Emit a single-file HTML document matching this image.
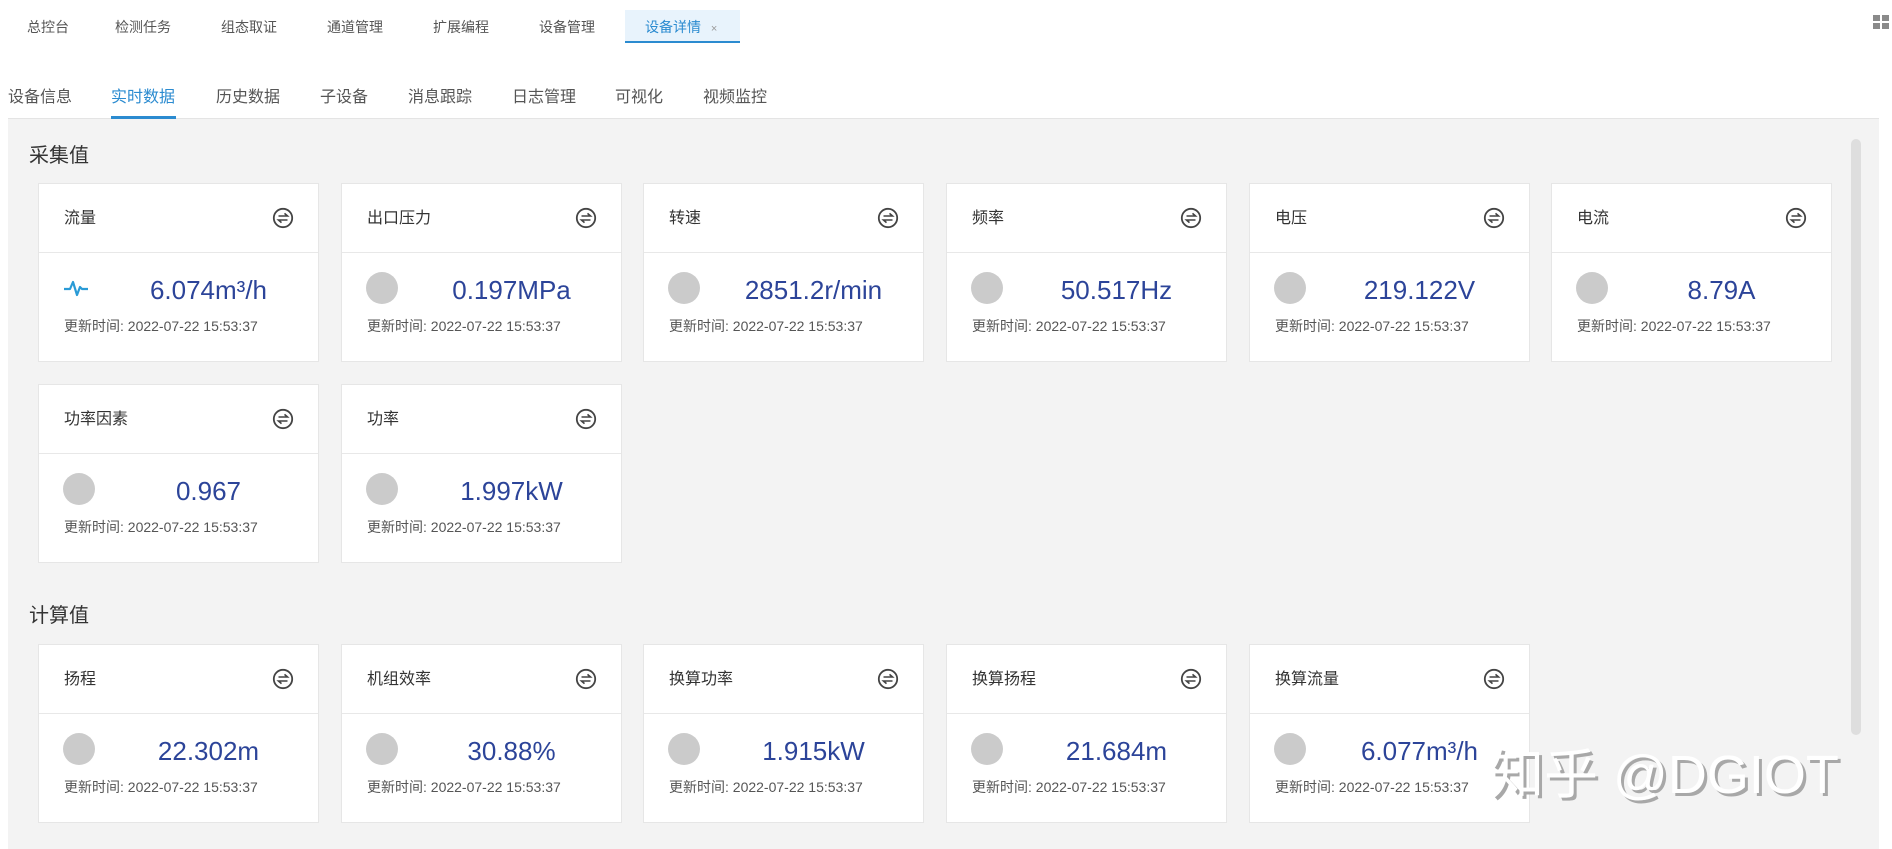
<!DOCTYPE html>
<html><head><meta charset="utf-8">
<style>
*{margin:0;padding:0;box-sizing:border-box}
body{width:1892px;height:849px;overflow:hidden;background:#fff;font-family:"Liberation Sans","Noto Sans CJK SC",sans-serif;position:relative;color:#333}
.a{position:absolute;white-space:nowrap}
.t1{top:17px;font-size:14px;color:#555}
.t2{top:83px;font-size:16px;color:#555}
.content{position:absolute;left:8px;top:119px;width:1871px;height:730px;background:#f3f3f3}
.sec{position:absolute;font-size:20px;color:#333}
.card{position:absolute;width:281px;height:179px;background:#fff;border:1px solid #e6e6e6}
.card .hd{height:69px;border-bottom:1px solid #e8e8e8;position:relative}
.card .ti{position:absolute;left:25px;top:20px;font-size:16px;color:#333}
.card .ic{position:absolute;left:233px;top:23px}
.card .dot{position:absolute;left:24px;top:88px;width:32px;height:32px;border-radius:50%;background:#cbcbcb}
.card .v{position:absolute;left:60px;right:0;top:91px;text-align:center;font-size:26px;color:#2c4499}
.card .tm{position:absolute;left:25px;top:132px;font-size:14px;color:#555}
</style></head><body>
<svg width="0" height="0" style="position:absolute"><defs><symbol id="sw" viewBox="0 0 22 22"><circle cx="11" cy="11" r="9.2" fill="none" stroke="#444" stroke-width="1.8"/><path d="M6.5 9h9l-3-2.6M15.5 13h-9l3 2.6" fill="none" stroke="#444" stroke-width="1.6"/></symbol></defs></svg>
<div class="a t1" style="left:27px">总控台</div>
<div class="a t1" style="left:115px">检测任务</div>
<div class="a t1" style="left:221px">组态取证</div>
<div class="a t1" style="left:327px">通道管理</div>
<div class="a t1" style="left:433px">扩展编程</div>
<div class="a t1" style="left:539px">设备管理</div>
<div class="a" style="left:625px;top:10px;width:115px;height:33px;background:#e8f3fc;border-bottom:2px solid #2b8bd0"></div>
<div class="a t1" style="left:645px;color:#2b8bd0">设备详情 <span style="font-size:11px;color:#999;margin-left:6px">×</span></div>
<div class="a" style="left:1873px;top:15px;width:7px;height:6px;background:#8a8a8a"></div>
<div class="a" style="left:1882px;top:15px;width:7px;height:6px;background:#8a8a8a"></div>
<div class="a" style="left:1873px;top:23px;width:7px;height:6px;background:#8a8a8a"></div>
<div class="a" style="left:1882px;top:23px;width:7px;height:6px;background:#8a8a8a"></div>

<div class="a t2" style="left:8px">设备信息</div>
<div class="a t2" style="left:111px;color:#2b8bd0">实时数据</div>
<div class="a t2" style="left:216px">历史数据</div>
<div class="a t2" style="left:320px">子设备</div>
<div class="a t2" style="left:408px">消息跟踪</div>
<div class="a t2" style="left:512px">日志管理</div>
<div class="a t2" style="left:615px">可视化</div>
<div class="a t2" style="left:703px">视频监控</div>
<div class="a" style="left:8px;top:118px;width:1871px;height:1px;background:#e4e4e4"></div>
<div class="a" style="left:111px;top:116px;width:65px;height:3px;background:#2b8bd0"></div>

<div class="content">
<div class="sec" style="left:21px;top:20px">采集值</div>
<div class="sec" style="left:21px;top:480px">计算值</div>

<div class="card" style="left:30px;top:64px"><div class="hd"><div class="ti">流量</div><svg class="ic" width="22" height="22"><use href="#sw"/></svg></div>
<svg style="position:absolute;left:24px;top:94px" width="26" height="20" viewBox="0 0 26 20"><path d="M1 11h6l3-7 4 13 3-8 2 2h6" fill="none" stroke="#2a9bd6" stroke-width="2.2" stroke-linejoin="round"/></svg>
<div class="v">6.074m³/h</div><div class="tm">更新时间: 2022-07-22 15:53:37</div></div>
<div class="card" style="left:333px;top:64px"><div class="hd"><div class="ti">出口压力</div><svg class="ic" width="22" height="22"><use href="#sw"/></svg></div><div class="dot"></div><div class="v">0.197MPa</div><div class="tm">更新时间: 2022-07-22 15:53:37</div></div>
<div class="card" style="left:635px;top:64px"><div class="hd"><div class="ti">转速</div><svg class="ic" width="22" height="22"><use href="#sw"/></svg></div><div class="dot"></div><div class="v">2851.2r/min</div><div class="tm">更新时间: 2022-07-22 15:53:37</div></div>
<div class="card" style="left:938px;top:64px"><div class="hd"><div class="ti">频率</div><svg class="ic" width="22" height="22"><use href="#sw"/></svg></div><div class="dot"></div><div class="v">50.517Hz</div><div class="tm">更新时间: 2022-07-22 15:53:37</div></div>
<div class="card" style="left:1241px;top:64px"><div class="hd"><div class="ti">电压</div><svg class="ic" width="22" height="22"><use href="#sw"/></svg></div><div class="dot"></div><div class="v">219.122V</div><div class="tm">更新时间: 2022-07-22 15:53:37</div></div>
<div class="card" style="left:1543px;top:64px"><div class="hd"><div class="ti">电流</div><svg class="ic" width="22" height="22"><use href="#sw"/></svg></div><div class="dot"></div><div class="v">8.79A</div><div class="tm">更新时间: 2022-07-22 15:53:37</div></div>

<div class="card" style="left:30px;top:265px"><div class="hd"><div class="ti">功率因素</div><svg class="ic" width="22" height="22"><use href="#sw"/></svg></div><div class="dot"></div><div class="v">0.967</div><div class="tm">更新时间: 2022-07-22 15:53:37</div></div>
<div class="card" style="left:333px;top:265px"><div class="hd"><div class="ti">功率</div><svg class="ic" width="22" height="22"><use href="#sw"/></svg></div><div class="dot"></div><div class="v">1.997kW</div><div class="tm">更新时间: 2022-07-22 15:53:37</div></div>

<div class="card" style="left:30px;top:525px"><div class="hd"><div class="ti">扬程</div><svg class="ic" width="22" height="22"><use href="#sw"/></svg></div><div class="dot"></div><div class="v">22.302m</div><div class="tm">更新时间: 2022-07-22 15:53:37</div></div>
<div class="card" style="left:333px;top:525px"><div class="hd"><div class="ti">机组效率</div><svg class="ic" width="22" height="22"><use href="#sw"/></svg></div><div class="dot"></div><div class="v">30.88%</div><div class="tm">更新时间: 2022-07-22 15:53:37</div></div>
<div class="card" style="left:635px;top:525px"><div class="hd"><div class="ti">换算功率</div><svg class="ic" width="22" height="22"><use href="#sw"/></svg></div><div class="dot"></div><div class="v">1.915kW</div><div class="tm">更新时间: 2022-07-22 15:53:37</div></div>
<div class="card" style="left:938px;top:525px"><div class="hd"><div class="ti">换算扬程</div><svg class="ic" width="22" height="22"><use href="#sw"/></svg></div><div class="dot"></div><div class="v">21.684m</div><div class="tm">更新时间: 2022-07-22 15:53:37</div></div>
<div class="card" style="left:1241px;top:525px"><div class="hd"><div class="ti">换算流量</div><svg class="ic" width="22" height="22"><use href="#sw"/></svg></div><div class="dot"></div><div class="v">6.077m³/h</div><div class="tm">更新时间: 2022-07-22 15:53:37</div></div>

<div class="a" style="left:1843px;top:20px;width:10px;height:596px;background:#dedede;border-radius:5px"></div>
</div>
<div class="a" style="left:1490px;top:730px;font-size:54px;color:#fff;text-shadow:3px 3px 0 #a8a8a8;letter-spacing:0px">知乎 @DGIOT</div>
</body></html>
